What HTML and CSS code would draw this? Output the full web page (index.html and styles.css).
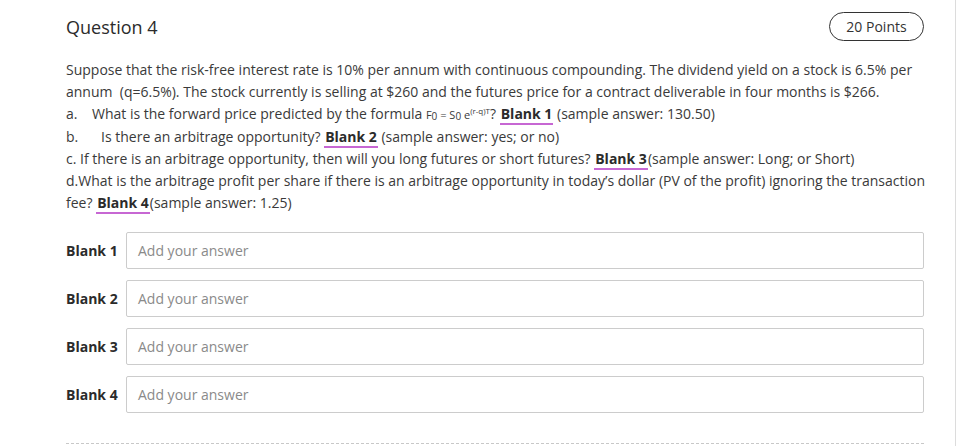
FILE: index.html
```html
<!DOCTYPE html>
<html>
<head>
<meta charset="utf-8">
<link rel="stylesheet" href="styles.css">
</head>
<body>
<div class="page">
  <div class="card">
    <div class="header">
      <h2 class="title">Question 4</h2>
      <span class="points">20 Points</span>
    </div>
    <div class="question">
      <div class="line">Suppose that the risk-free interest rate is 10% per annum with continuous compounding. The dividend yield on a stock is 6.5% per</div>
      <div class="line">annum&nbsp; (q=6.5%). The stock currently is selling at $260 and the futures price for a contract deliverable in four months is $266.</div>
      <div class="line"><span class="marker-a">a.</span>What is the forward price predicted by the formula <span class="formula">F<sub>0</sub> = S<sub>0</sub> e<sup>(r-q)T</sup></span>? <span class="blank">Blank 1</span> (sample answer: 130.50)</div>
      <div class="line"><span class="marker-b">b.</span>Is there an arbitrage opportunity? <span class="blank">Blank 2</span> (sample answer: yes; or no)</div>
      <div class="line">c. If there is an arbitrage opportunity, then will you long futures or short futures? <span class="blank">Blank 3</span>(sample answer: Long; or Short)</div>
      <div class="line">d.What is the arbitrage profit per share if there is an arbitrage opportunity in today’s dollar (PV of the profit) ignoring the transaction</div>
      <div class="line">fee? <span class="blank">Blank 4</span>(sample answer: 1.25)</div>
    </div>
    <div class="answers">
      <div class="answer-row"><span class="label">Blank 1</span><div class="input">Add your answer</div></div>
      <div class="answer-row"><span class="label">Blank 2</span><div class="input">Add your answer</div></div>
      <div class="answer-row"><span class="label">Blank 3</span><div class="input">Add your answer</div></div>
      <div class="answer-row"><span class="label">Blank 4</span><div class="input">Add your answer</div></div>
    </div>
    <div class="divider"></div>
  </div>
</div>
</body>
</html>
```

FILE: styles.css
```css
html, body {
  margin: 0;
  padding: 0;
  background: #ffffff;
}
body {
  font-family: "Open Sans", "Liberation Sans", sans-serif;
  color: #333333;
}
.page {
  width: 955px;
  height: 446px;
  border-right: 1px solid #dcdcdc;
  overflow: hidden;
}
.card {
  padding: 12px 31px 0 66px;
}
.header {
  display: flex;
  justify-content: space-between;
  align-items: center;
  height: 29px;
}
.title {
  margin: 0;
  font-size: 18px;
  font-weight: 400;
  color: #2b2b2b;
  line-height: 24px;
}
.points {
  box-sizing: border-box;
  width: 95px;
  height: 29px;
  border: 1px solid #333333;
  border-radius: 15px;
  display: flex;
  align-items: center;
  justify-content: center;
  font-size: 14px;
  color: #333333;
}
.question {
  margin-top: 18px;
  font-size: 14px;
  line-height: 22px;
  color: #3a3a3a;
}
.line {
  white-space: nowrap;
}
.marker-a {
  display: inline-block;
  width: 26px;
}
.marker-b {
  display: inline-block;
  width: 35px;
}
.formula {
  font-size: 11px;
}
.formula sub {
  font-size: 10px;
  vertical-align: -1px;
  line-height: 0;
}
.formula sup {
  font-size: 8px;
  vertical-align: 5px;
  line-height: 0;
}
.blank {
  font-weight: 700;
  color: #2b2b2b;
  border-bottom: 2px solid #c767d3;
  padding: 0 1px;
}
.answers {
  margin-top: 18px;
  display: flex;
  flex-direction: column;
  gap: 11px;
}
.answer-row {
  display: flex;
  align-items: center;
}
.label {
  width: 60px;
  font-size: 14px;
  font-weight: 700;
  color: #2b2b2b;
}
.input {
  flex: 1;
  box-sizing: border-box;
  height: 37px;
  border: 1px solid #cccccc;
  border-radius: 2px;
  padding: 0 11px;
  display: flex;
  align-items: center;
  font-size: 14px;
  color: #8a8a8a;
}
.divider {
  margin-top: 30px;
  border-top: 1px dashed #c8c8c8;
}
```
